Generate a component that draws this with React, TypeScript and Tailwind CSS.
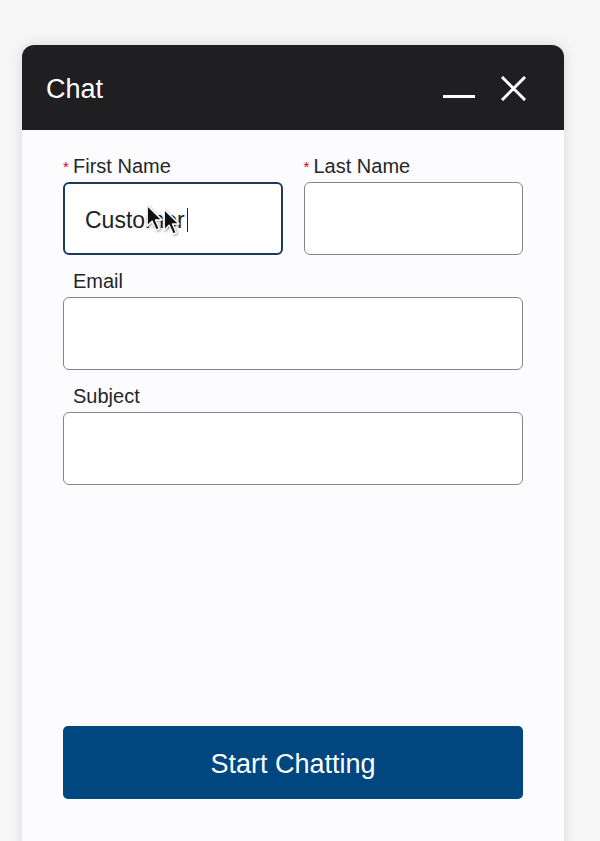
import React from "react";

const font = { fontFamily: '"Liberation Sans", Arial, Helvetica, sans-serif' };

function Label({ text, required }: { text: string; required?: boolean }) {
  return (
    <div className="flex items-center h-[24px] mb-[4px] text-[20px] leading-[24px] text-[#262626]">
      <span className="w-[10px] text-[15px] text-[#d0021b] self-start mt-[1px]">{required ? "*" : ""}</span>
      {text}
    </div>
  );
}

function Cursor() {
  return (
    <svg width="20" height="29" viewBox="0 0 18 26" className="drop-shadow-[1px_1px_1px_rgba(0,0,0,0.35)]">
      <path d="M1 1 L1 20 L5.5 15.5 L9 23.5 L12 22.2 L8.6 14.4 L14.5 14.4 Z" fill="#111" stroke="#fff" strokeWidth="1.4" strokeLinejoin="round" />
    </svg>
  );
}

export default function App() {
  return (
    <div className="min-h-[841px] h-[841px] overflow-hidden bg-[#f6f6f7] pt-[45px] pl-[22px]" style={font}>
      <div className="w-[542px] rounded-t-[12px] overflow-hidden shadow-[0_0_14px_rgba(0,0,0,0.12)]">
        {/* header */}
        <div className="h-[85px] bg-[#1f1e21] flex items-center justify-between pl-[24px] pr-[38px]">
          <span className="text-[27px] text-white mt-[4px]">Chat</span>
          <div className="flex items-center gap-[26px] mt-[2px]">
            <svg width="32" height="26" viewBox="0 0 32 26">
              <rect x="0" y="19" width="32" height="3" fill="#fff" />
            </svg>
            <svg width="25" height="25" viewBox="0 0 25 25">
              <path d="M2 2 L23 23 M23 2 L2 23" stroke="#fff" strokeWidth="3" strokeLinecap="square" />
            </svg>
          </div>
        </div>

        {/* body */}
        <div className="bg-[#fcfbfd] px-[41px] pt-[24px] h-[760px]">
          <div className="grid grid-cols-2 gap-x-[21px]">
            <div>
              <Label text="First Name" required />
              <div className="relative h-[73px] rounded-[6px] border-2 border-[#1b3a5e] bg-white flex items-center pl-[20px] pt-[3px] text-[23px] text-[#222]">
                Customer
                <span className="w-[1.5px] h-[24px] bg-[#222] ml-[2px]" />
                <div className="absolute left-[81px] top-[20px]">
                  <Cursor />
                </div>
                <div className="absolute left-[98px] top-[24px]">
                  <Cursor />
                </div>
              </div>
            </div>
            <div>
              <Label text="Last Name" required />
              <div className="h-[73px] rounded-[6px] border-[1.5px] border-[#858585] bg-white" />
            </div>
          </div>

          <div className="mt-[14px]">
            <Label text="Email" />
            <div className="h-[73px] rounded-[6px] border-[1.5px] border-[#858585] bg-white" />
          </div>

          <div className="mt-[14px]">
            <Label text="Subject" />
            <div className="h-[73px] rounded-[6px] border-[1.5px] border-[#858585] bg-white" />
          </div>

          <button className="mt-[241px] w-full h-[73px] rounded-[5px] bg-[#00467f] text-white text-[27px] pt-[3px]">
            Start Chatting
          </button>
        </div>
      </div>
    </div>
  );
}
